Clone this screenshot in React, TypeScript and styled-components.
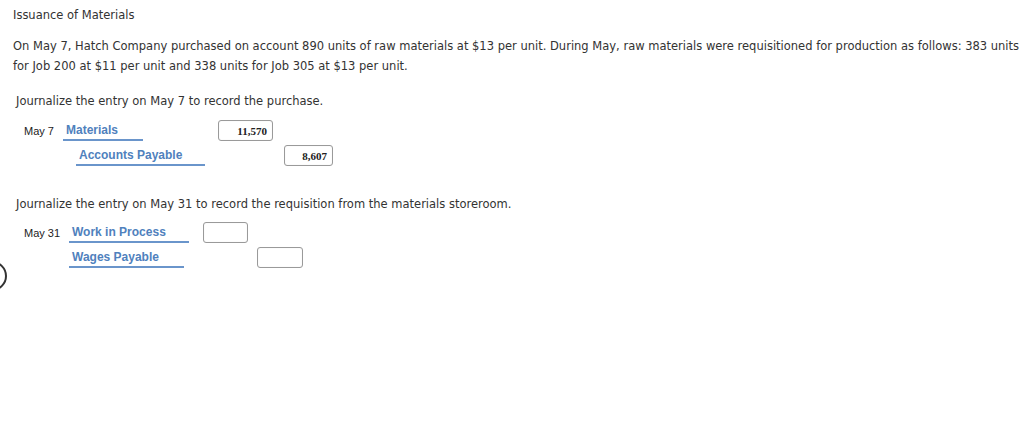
import React from "react"
import styled, { createGlobalStyle } from "styled-components"

const GlobalStyle = createGlobalStyle`
  html, body {
    margin: 0;
    padding: 0;
    background: #fff;
  }
  body {
    font-family: "DejaVu Sans", Verdana, sans-serif;
    color: #333;
  }
`

const Page = styled.div`
  position: relative;
  width: 1024px;
  height: 445px;
  box-sizing: border-box;
  padding: 8px 2px 0 13px;
  overflow: hidden;
`

const Title = styled.div`
  font-size: 11.5px;
  line-height: 14px;
`

const Problem = styled.p`
  margin: 14px 0 0;
  font-size: 11.5px;
  line-height: 20px;
`

const Instruction = styled.div<{ $gap: number }>`
  margin: ${(p) => p.$gap}px 0 0 3px;
  font-size: 11.5px;
  line-height: 14px;
`

const Journal = styled.div<{ $gap: number }>`
  margin: ${(p) => p.$gap}px 0 0 11px;
  display: flex;
  flex-direction: column;
`

const Row = styled.div`
  display: flex;
  align-items: center;
  height: 25px;
`

const DateCell = styled.div<{ $width: number }>`
  width: ${(p) => p.$width}px;
  flex: none;
  padding-top: 1px;
  font-family: "Liberation Sans", Arial, sans-serif;
  font-size: 11px;
  color: #222;
`

const Account = styled.div<{ $width: number; $indent?: number }>`
  width: ${(p) => p.$width}px;
  margin-left: ${(p) => p.$indent ?? 0}px;
  flex: none;
  box-sizing: border-box;
  height: 20px;
  padding: 2px 3px 0;
  line-height: 14px;
  border-bottom: 2px solid #6a95cb;
  font-family: "Liberation Sans", Arial, sans-serif;
  font-size: 12px;
  font-weight: bold;
  color: #4f81bd;
  white-space: nowrap;
`

const AmountBox = styled.div<{ $offset: number; $width: number }>`
  margin-left: ${(p) => p.$offset}px;
  width: ${(p) => p.$width}px;
  height: 21px;
  flex: none;
  box-sizing: border-box;
  border: 1px solid #9a9a9a;
  border-radius: 3px;
  box-shadow: inset 0 0 1px rgba(0, 0, 0, 0.15);
  padding: 0 5px;
  display: flex;
  align-items: center;
  justify-content: flex-end;
  font-family: "Liberation Serif", "Times New Roman", serif;
  font-size: 11px;
  font-weight: bold;
  color: #222;
`

const EdgeRing = styled.svg`
  position: absolute;
  left: 0;
  top: 260px;
`

export default function App() {
  return (
    <>
      <GlobalStyle />
      <Page>
        <Title>Issuance of Materials</Title>
        <Problem>
          On May 7, Hatch Company purchased on account 890 units of raw materials at $13 per unit. During May, raw
          materials were requisitioned for production as follows: 383 units for Job 200 at $11 per unit and 338 units
          for Job 305 at $13 per unit.
        </Problem>

        <Instruction $gap={18}>Journalize the entry on May 7 to record the purchase.</Instruction>
        <Journal $gap={10}>
          <Row>
            <DateCell $width={39}>May 7</DateCell>
            <Account $width={80}>Materials</Account>
            <AmountBox $offset={75} $width={55}>11,570</AmountBox>
          </Row>
          <Row>
            <DateCell $width={39} />
            <Account $width={129} $indent={13}>
              Accounts Payable
            </Account>
            <AmountBox $offset={79} $width={49}>8,607</AmountBox>
          </Row>
        </Journal>

        <Instruction $gap={29}>Journalize the entry on May 31 to record the requisition from the materials storeroom.</Instruction>
        <Journal $gap={9}>
          <Row>
            <DateCell $width={45}>May 31</DateCell>
            <Account $width={120}>Work in Process</Account>
            <AmountBox $offset={14} $width={45} />
          </Row>
          <Row>
            <DateCell $width={45} />
            <Account $width={115}>Wages Payable</Account>
            <AmountBox $offset={73} $width={46} />
          </Row>
        </Journal>

        <EdgeRing width="8" height="32" viewBox="0 0 8 32">
          <circle cx="-8" cy="16" r="14" fill="none" stroke="#333" strokeWidth="2" />
        </EdgeRing>
      </Page>
    </>
  )
}
